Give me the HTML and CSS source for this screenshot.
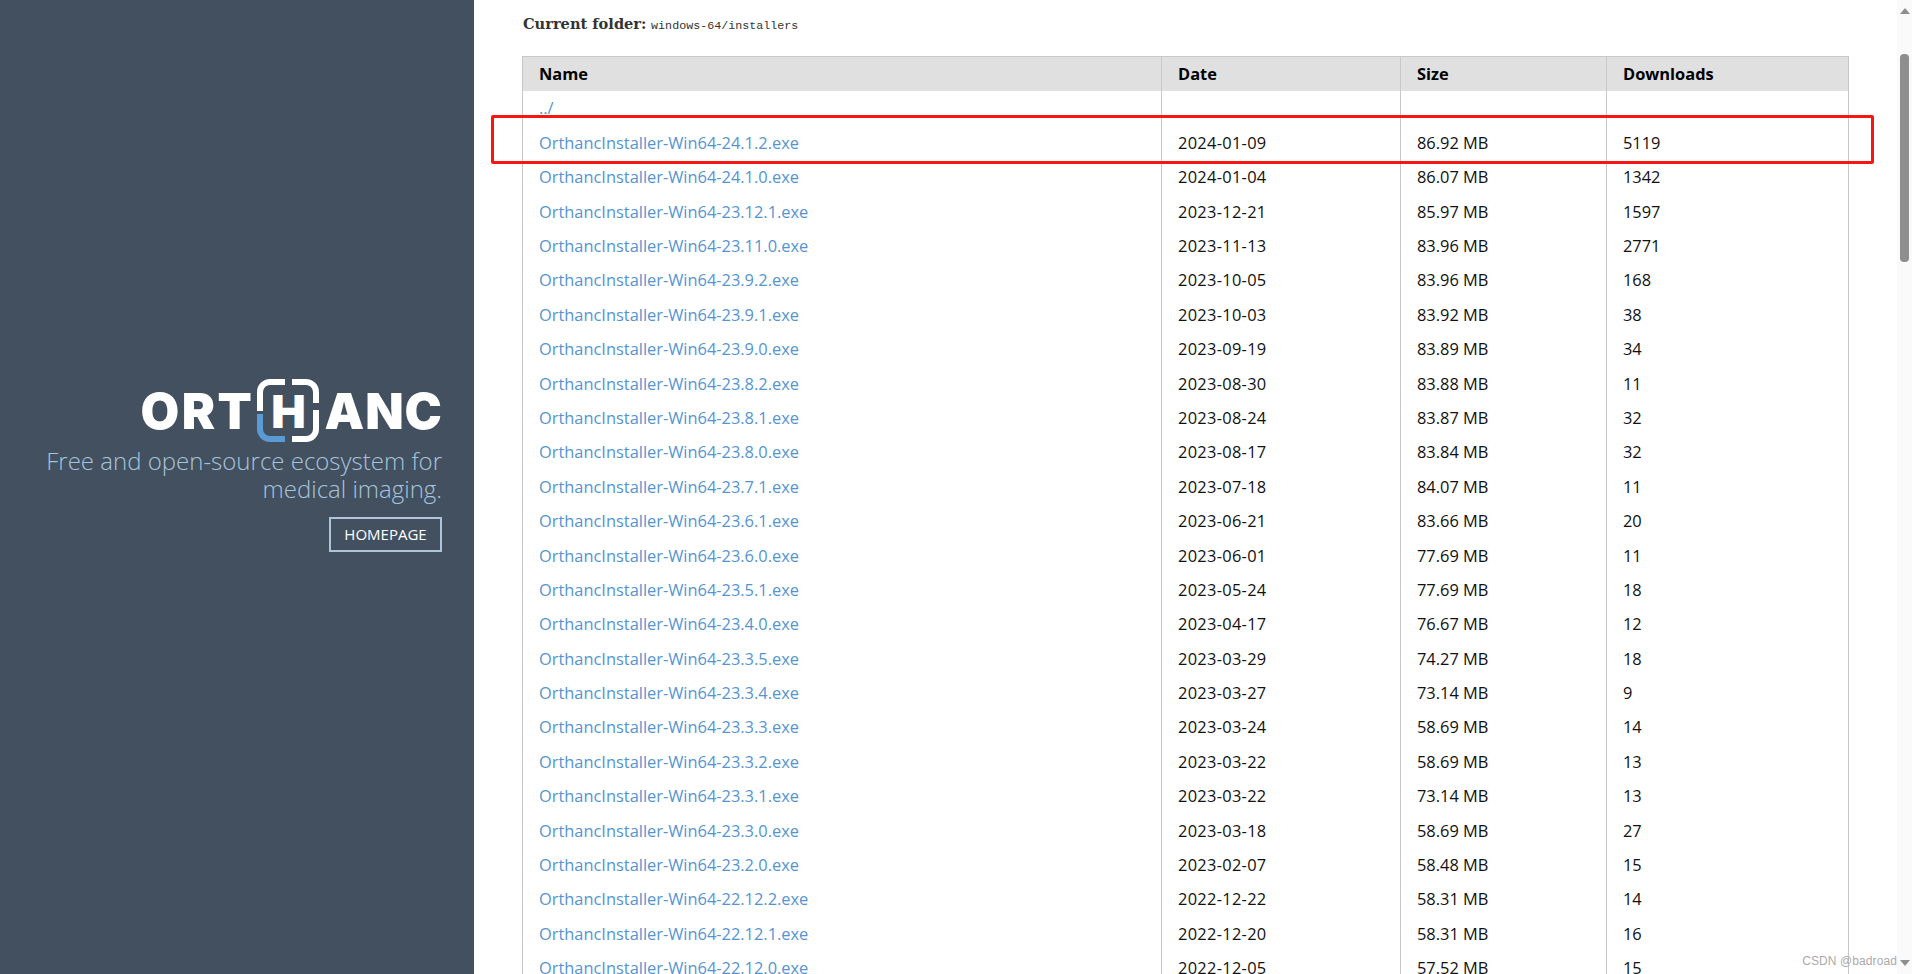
FILE: index.html
```html
<!DOCTYPE html>
<html lang="en">

<head>
	<meta charset="UTF-8">
	<title>Orthanc downloads</title>
	<link rel="stylesheet" href="styles.css">
</head>

<body>
	<!-- sidebar -->
	<aside class="sidebar">
		<div class="logo">
			<span class="logo-text logo-left">ORT</span>
			<span class="logo-mark">
				<svg class="logo-frame" viewBox="0 0 62 63" width="62" height="63">
					<path d="M28 3H13a10 10 0 0 0-10 10V32" fill="none" stroke="#fff" stroke-width="6"/>
					<path d="M3 35V50a10 10 0 0 0 10 10H28" fill="none" stroke="#5b9bd5" stroke-width="6"/>
					<path d="M35 3H49a10 10 0 0 1 10 10V24" fill="none" stroke="#fff" stroke-width="6"/>
					<path d="M59 31V50a10 10 0 0 1-10 10H35" fill="none" stroke="#fff" stroke-width="6"/>
				</svg>
				<span class="logo-h">H</span>
			</span>
			<span class="logo-text logo-right">ANC</span>
		</div>
		<p class="tagline">Free and open-source ecosystem for medical imaging.</p>
		<a class="home-btn" href="#">HOMEPAGE</a>
	</aside>

	<!-- file list -->
	<main class="content">
		<p class="folder"><b>Current folder:</b> <code>windows-64/installers</code></p>
		<table class="files">
			<thead>
				<tr><th class="col-name">Name</th><th class="col-date">Date</th><th class="col-size">Size</th><th>Downloads</th></tr>
			</thead>
			<tbody>
				<tr><td><a href="#">../</a></td><td></td><td></td><td></td></tr>
				<tr><td><a href="#">OrthancInstaller-Win64-24.1.2.exe</a></td><td>2024-01-09</td><td>86.92 MB</td><td>5119</td></tr>
				<tr><td><a href="#">OrthancInstaller-Win64-24.1.0.exe</a></td><td>2024-01-04</td><td>86.07 MB</td><td>1342</td></tr>
				<tr><td><a href="#">OrthancInstaller-Win64-23.12.1.exe</a></td><td>2023-12-21</td><td>85.97 MB</td><td>1597</td></tr>
				<tr><td><a href="#">OrthancInstaller-Win64-23.11.0.exe</a></td><td>2023-11-13</td><td>83.96 MB</td><td>2771</td></tr>
				<tr><td><a href="#">OrthancInstaller-Win64-23.9.2.exe</a></td><td>2023-10-05</td><td>83.96 MB</td><td>168</td></tr>
				<tr><td><a href="#">OrthancInstaller-Win64-23.9.1.exe</a></td><td>2023-10-03</td><td>83.92 MB</td><td>38</td></tr>
				<tr><td><a href="#">OrthancInstaller-Win64-23.9.0.exe</a></td><td>2023-09-19</td><td>83.89 MB</td><td>34</td></tr>
				<tr><td><a href="#">OrthancInstaller-Win64-23.8.2.exe</a></td><td>2023-08-30</td><td>83.88 MB</td><td>11</td></tr>
				<tr><td><a href="#">OrthancInstaller-Win64-23.8.1.exe</a></td><td>2023-08-24</td><td>83.87 MB</td><td>32</td></tr>
				<tr><td><a href="#">OrthancInstaller-Win64-23.8.0.exe</a></td><td>2023-08-17</td><td>83.84 MB</td><td>32</td></tr>
				<tr><td><a href="#">OrthancInstaller-Win64-23.7.1.exe</a></td><td>2023-07-18</td><td>84.07 MB</td><td>11</td></tr>
				<tr><td><a href="#">OrthancInstaller-Win64-23.6.1.exe</a></td><td>2023-06-21</td><td>83.66 MB</td><td>20</td></tr>
				<tr><td><a href="#">OrthancInstaller-Win64-23.6.0.exe</a></td><td>2023-06-01</td><td>77.69 MB</td><td>11</td></tr>
				<tr><td><a href="#">OrthancInstaller-Win64-23.5.1.exe</a></td><td>2023-05-24</td><td>77.69 MB</td><td>18</td></tr>
				<tr><td><a href="#">OrthancInstaller-Win64-23.4.0.exe</a></td><td>2023-04-17</td><td>76.67 MB</td><td>12</td></tr>
				<tr><td><a href="#">OrthancInstaller-Win64-23.3.5.exe</a></td><td>2023-03-29</td><td>74.27 MB</td><td>18</td></tr>
				<tr><td><a href="#">OrthancInstaller-Win64-23.3.4.exe</a></td><td>2023-03-27</td><td>73.14 MB</td><td>9</td></tr>
				<tr><td><a href="#">OrthancInstaller-Win64-23.3.3.exe</a></td><td>2023-03-24</td><td>58.69 MB</td><td>14</td></tr>
				<tr><td><a href="#">OrthancInstaller-Win64-23.3.2.exe</a></td><td>2023-03-22</td><td>58.69 MB</td><td>13</td></tr>
				<tr><td><a href="#">OrthancInstaller-Win64-23.3.1.exe</a></td><td>2023-03-22</td><td>73.14 MB</td><td>13</td></tr>
				<tr><td><a href="#">OrthancInstaller-Win64-23.3.0.exe</a></td><td>2023-03-18</td><td>58.69 MB</td><td>27</td></tr>
				<tr><td><a href="#">OrthancInstaller-Win64-23.2.0.exe</a></td><td>2023-02-07</td><td>58.48 MB</td><td>15</td></tr>
				<tr><td><a href="#">OrthancInstaller-Win64-22.12.2.exe</a></td><td>2022-12-22</td><td>58.31 MB</td><td>14</td></tr>
				<tr><td><a href="#">OrthancInstaller-Win64-22.12.1.exe</a></td><td>2022-12-20</td><td>58.31 MB</td><td>16</td></tr>
				<tr><td><a href="#">OrthancInstaller-Win64-22.12.0.exe</a></td><td>2022-12-05</td><td>57.52 MB</td><td>15</td></tr>
			</tbody>
		</table>
	</main>

	<!-- scrollbar -->
	<div class="scrollbar">
		<span class="arrow-up"></span>
		<span class="thumb"></span>
		<span class="arrow-down"></span>
	</div>

	<!-- annotation drawn over the screenshot -->
	<div class="highlight"></div>
	<div class="watermark">CSDN @badroad</div>
</body>

</html>
```

FILE: styles.css
```css
/* reset */
* {
	margin: 0;
	padding: 0;
	box-sizing: border-box;
}

a {
	text-decoration: none;
	color: #5594d2;
}

html,
body {
	height: 100%;
}

body {
	display: flex;
	overflow: hidden;
	background-color: #fff;
	font-family: "Open Sans", "Noto Sans", sans-serif;
	font-size: 16px;
}

/* sidebar */
.sidebar {
	flex: 0 0 474px;
	height: 100%;
	padding: 379px 32px 0 0;
	background-color: #42505f;

	display: flex;
	flex-direction: column;
	align-items: flex-end;
}

.logo {
	display: flex;
	align-items: center;
	height: 63px;
	color: #fff;
	font-family: Inter, "Open Sans", sans-serif;
	font-weight: 900;
}

.logo-text {
	font-size: 50px;
	line-height: 1;
}

.logo-left {
	letter-spacing: 2.5px;
}

.logo-right {
	letter-spacing: 1px;
	margin-right: -1px;
}

.logo-mark {
	position: relative;
	display: flex;
	justify-content: center;
	align-items: center;
	width: 62px;
	height: 63px;
	margin: 0 5px 0 3px;
}

.logo-frame {
	position: absolute;
	top: 0;
	left: 0;
}

.logo-h {
	font-size: 46px;
	line-height: 1;
}

.tagline {
	width: 400px;
	margin-top: 5px;
	color: #a8c4dc;
	font-size: 24px;
	font-weight: 300;
	line-height: 28px;
	text-align: right;
}

.home-btn {
	display: flex;
	justify-content: center;
	align-items: center;
	width: 113px;
	height: 35px;
	margin-top: 14px;
	padding-bottom: 2px;
	border: 2px solid #afc4d8;
	color: #fff;
	font-size: 15px;
}

/* file list */
.content {
	flex: 1;
	height: 100%;
	padding: 0 48px;
	overflow: hidden;
}

.folder {
	height: 56px;
	padding-top: 14px;
	padding-left: 1px;
	color: #333;
	font-family: "DejaVu Serif", "Liberation Serif", serif;
	font-size: 14.6px;
	line-height: 20px;
}

.folder code {
	font-family: "Liberation Mono", monospace;
	font-size: 11.7px;
}

.files {
	width: 100%;
	table-layout: fixed;
	border-collapse: collapse;
	border-left: 1px solid #c8c8c8;
	border-right: 1px solid #c8c8c8;
	border-top: 1px solid #c8c8c8;
	color: #111;
	font-size: 16.4px;
}

.col-name {
	width: 639px;
}

.col-date {
	width: 239px;
}

.col-size {
	width: 206px;
}

.files th {
	height: 34px;
	padding-left: 16px;
	background-color: #e0e0e0;
	color: #000;
	text-align: left;
	font-weight: 700;
	border-left: 1px solid #c8c8c8;
}

.files td {
	height: 34.4px;
	padding: 0.5px 0 0 16px;
	border-left: 1px solid #c8c8c8;
}

.files td:nth-child(2) {
	letter-spacing: 0.3px;
}

/* scrollbar */
.scrollbar {
	position: relative;
	flex: 0 0 15px;
	height: 100%;
	background-color: #fafafa;
}

.arrow-up,
.arrow-down {
	position: absolute;
	left: 3px;
	width: 0;
	height: 0;
	border-left: 5px solid transparent;
	border-right: 5px solid transparent;
}

.arrow-up {
	top: 8px;
	border-bottom: 6px solid #8e8e8e;
}

.arrow-down {
	bottom: 8px;
	border-top: 6px solid #8e8e8e;
}

.thumb {
	position: absolute;
	top: 54px;
	left: 3px;
	width: 9px;
	height: 208px;
	border-radius: 4px;
	background-color: #8e8e8e;
}

/* red box */
.highlight {
	position: absolute;
	top: 115px;
	left: 491px;
	width: 1383px;
	height: 49px;
	border: 3px solid #f8170f;
	border-radius: 2px;
}

.watermark {
	position: absolute;
	right: 15px;
	bottom: 6px;
	color: #aaa;
	font-family: "Liberation Sans", sans-serif;
	font-size: 12px;
	letter-spacing: 0.1px;
}
```
